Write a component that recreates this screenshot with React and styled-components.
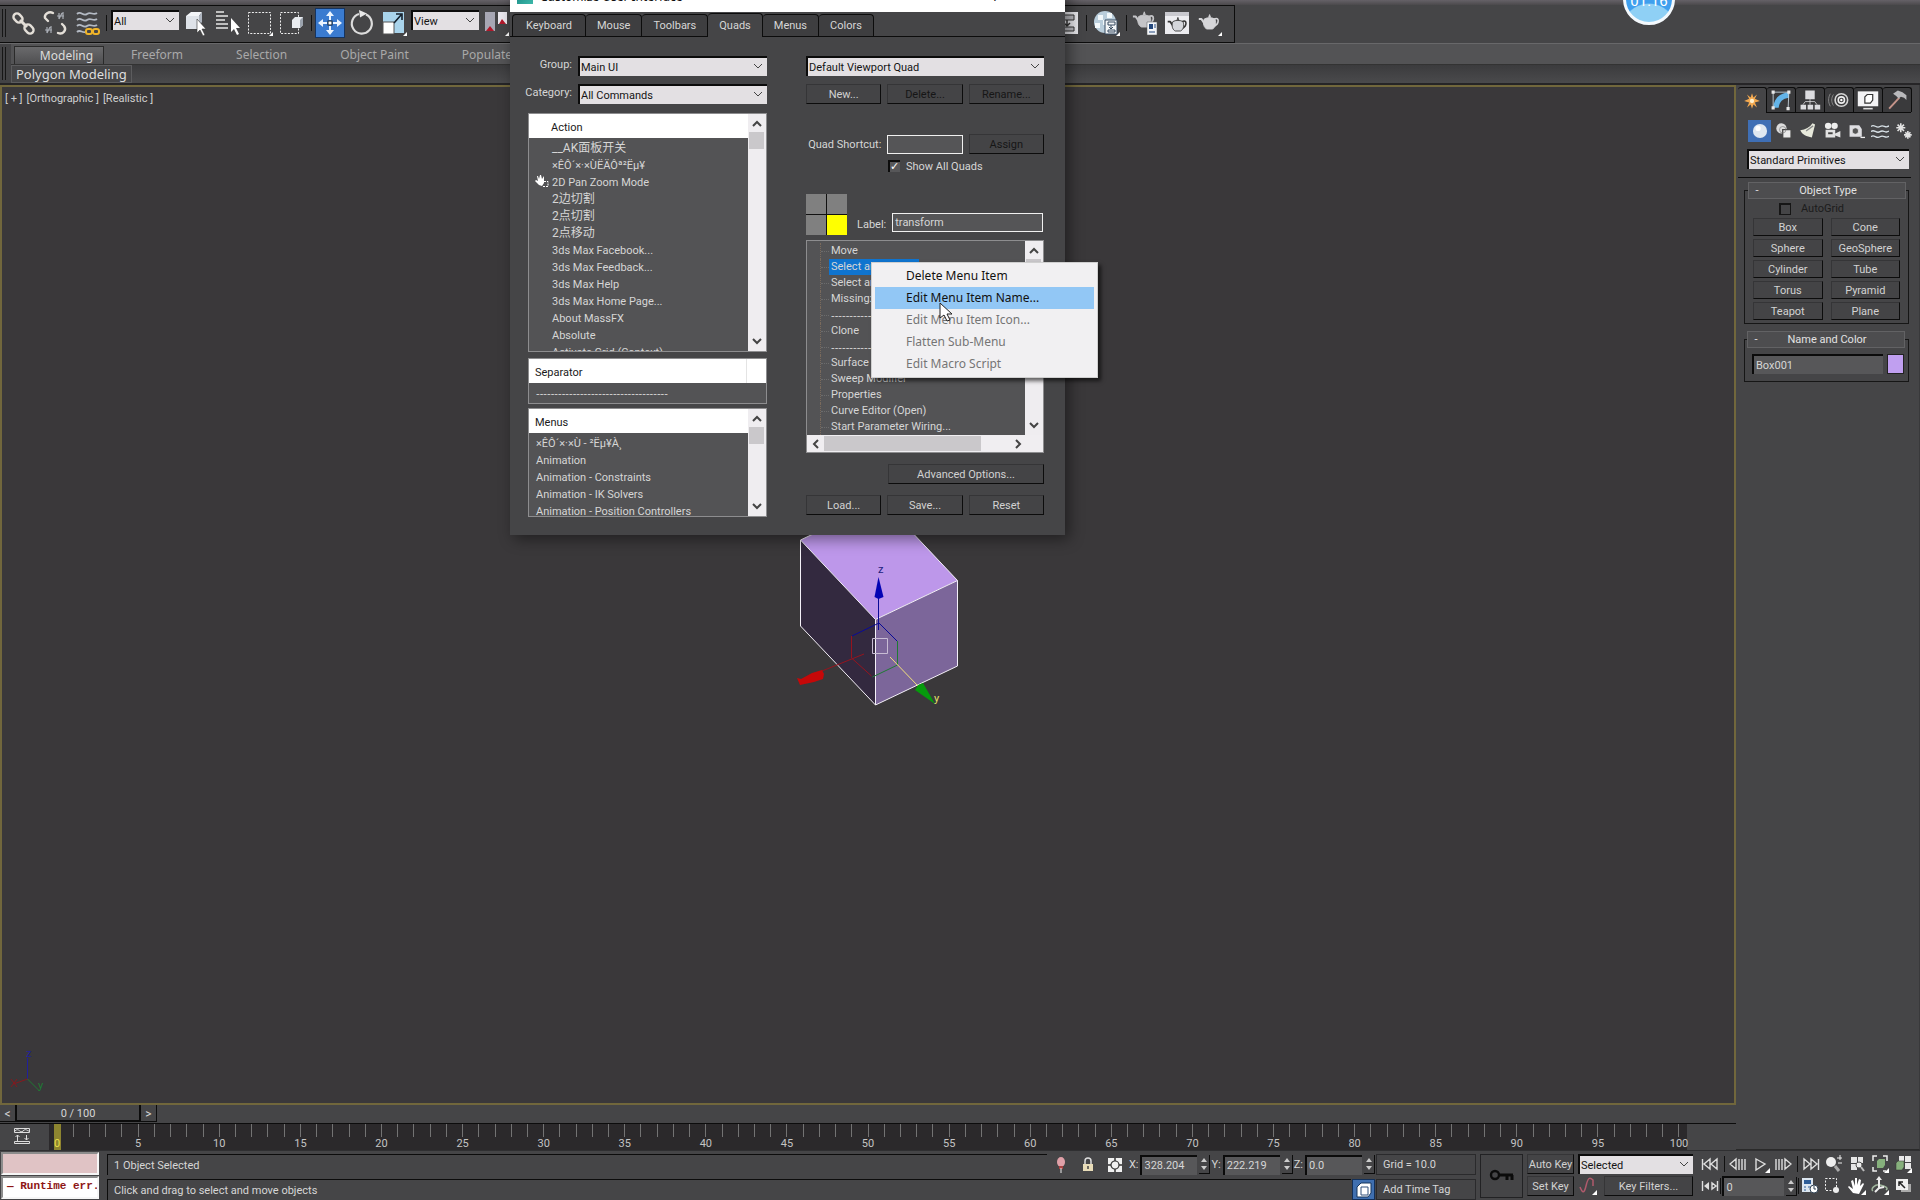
import { useState } from "react";
import styled, { createGlobalStyle, css } from "styled-components";

const tabs = ["Keyboard", "Mouse", "Toolbars", "Quads", "Menus", "Colors"];
const ribbonTabs = ["Modeling", "Freeform", "Selection", "Object Paint", "Populate"];
const actions = [
  "__AK面板开关",
  "×ÊÔ´×·×ÙËÄÔª²Ëµ¥",
  "2D Pan Zoom Mode",
  "2边切割",
  "2点切割",
  "2点移动",
  "3ds Max Facebook...",
  "3ds Max Feedback...",
  "3ds Max Help",
  "3ds Max Home Page...",
  "About MassFX",
  "Absolute",
  "Activate Grid (Context)",
];
const menus = [
  "×ÊÔ´×·×Ù - ²Ëµ¥À¸",
  "Animation",
  "Animation - Constraints",
  "Animation - IK Solvers",
  "Animation - Position Controllers",
];
const quadItems = [
  "Move",
  "Select and Rotate",
  "Select and Scale",
  "Missing:",
  "---------------------",
  "Clone",
  "---------------------",
  "Surface",
  "Sweep Modifier",
  "Properties",
  "Curve Editor (Open)",
  "Start Parameter Wiring...",
];
const contextItems = [
  { text: "Delete Menu Item" },
  { text: "Edit Menu Item Name...", active: true },
  { text: "Edit Menu Item Icon...", disabled: true },
  { text: "Flatten Sub-Menu", disabled: true },
  { text: "Edit Macro Script", disabled: true },
];
const primitives = [
  "Box", "Cone", "Sphere", "GeoSphere", "Cylinder",
  "Tube", "Torus", "Pyramid", "Teapot", "Plane",
];
const frames = Array.from({ length: 101 }, (_, i) => i);
const hasHan = (s) => /[\u4e00-\u9fff]/.test(s);

/* ---------- icons ---------- */

const Corner = () => <path d="M27 23v4h-4z" fill="#fff" />;

const Svg = ({ size = 28, children }) => (
  <svg width={size} height={size} viewBox="0 0 28 28" fill="none" aria-hidden="true">
    {children}
  </svg>
);

const LinkIcon = () => (
  <Svg>
    <g stroke="#e4dfd8" strokeWidth="2.4">
      <rect x="-5" y="-3.5" width="10" height="7" rx="3.5" transform="translate(9 9) rotate(45)" />
      <rect x="-5" y="-3.5" width="10" height="7" rx="3.5" transform="translate(20 20) rotate(45)" />
      <path d="M11 11l7 7" strokeWidth="3" />
    </g>
  </Svg>
);

const UnlinkIcon = () => (
  <Svg>
    <g stroke="#e4dfd8" strokeWidth="2.4" strokeLinecap="round">
      <path d="M12 4C8 2 3 5 4 9l3 3" />
      <path d="M17 24c5 2 9-3 6-7l-2-2" />
    </g>
    <g stroke="#a9adb5" strokeWidth="1.2">
      <path d="M18 4v6M16 7h7M21 4l-3 6M22 3v7" />
      <path d="M6 18v6M4 21h7M9 18l-3 6M10 17v7" />
    </g>
  </Svg>
);

const BindIcon = () => (
  <Svg>
    <g stroke="#b4bac4" strokeWidth="1.8">
      <path d="M4 5c4-4 6 3 10 0s6 2 10-1" />
      <path d="M4 11c4-4 6 3 10 0s6 2 10-1" />
      <path d="M4 17c4-4 6 3 10 0s6 2 10-1" />
      <path d="M4 23c3-3 5 1 8 0" />
    </g>
    <g stroke="#f0b429" strokeWidth="2">
      <rect x="13" y="20" width="6" height="5" rx="2" />
      <rect x="20" y="20" width="6" height="5" rx="2" />
    </g>
  </Svg>
);

const SelectIcon = () => (
  <Svg>
    <path d="M4 7l5-4h11l-3 4z" fill="#f3f5f8" />
    <path d="M4 7h13v13H4z" fill="#dfe3e9" />
    <path d="M17 7l3-4v10l-3 4z" fill="#aeb5bf" />
    <path d="M15 10v14l3-3 3 6 2-1-3-6h4z" fill="#fff" stroke="#333" strokeWidth=".6" />
  </Svg>
);

const ListIcon = () => (
  <Svg>
    <path d="M2 3h8M2 7h12M2 11h9M2 15h12M2 19h12" stroke="#e8e8e8" strokeWidth="1.4" />
    <path d="M17 9v14l3-3 3 6 2-1-3-6h4z" fill="#fff" />
  </Svg>
);

const RegionIcon = () => (
  <Svg>
    <rect x="2.5" y="3.5" width="22" height="21" stroke="#eee" strokeDasharray="2 1.4" />
    <Corner />
  </Svg>
);

const WindowIcon = () => (
  <Svg>
    <rect x="2.5" y="3.5" width="18" height="21" stroke="#eee" strokeDasharray="2 1.4" />
    <path d="M14 11l3-3h8v8l-3 3h-8z" fill="#e9ecf0" />
    <path d="M22 11l3-3v8l-3 3z" fill="#9ba3ae" />
  </Svg>
);

const MoveIcon = () => (
  <Svg>
    <path d="M14 2l4 5h-3v4h-2V7h-3zM14 26l4-5h-3v-4h-2v4h-3zM2 14l5-4v3h4v2H7v3zM26 14l-5-4v3h-4v2h4v3z" fill="#eaf4ff" />
    <rect x="12" y="12" width="4" height="4" fill="#fff" stroke="#123" />
  </Svg>
);

const RotateIcon = () => (
  <Svg>
    <path d="M18 5.500A10 10 0 1 1 11 5" stroke="#dcdcdc" strokeWidth="2.200" />
    <path d="M11 1l8 3.500-7 4z" fill="#e8e8e8" />
  </Svg>
);

const ScaleIcon = () => (
  <Svg>
    <path d="M3 3h21v21H3z" fill="#a9d4ec" />
    <path d="M3 13h11v12H3z" fill="#fff" stroke="#555" />
    <path d="M14 14l7-8M16 5h6v6" stroke="#14202c" strokeWidth="1.600" />
    <Corner />
  </Svg>
);

const AlignIcon = () => (
  <Svg>
    <path d="M3 3h10v19H3z" fill="#a7a7b4" />
    <path d="M16 3h9v12h-9z" fill="#eceaf0" />
    <path d="M4 22h8l-4-5zM17 15h7l-4-5z" fill="#b1182a" />
    <Corner />
  </Svg>
);

const SchematicIcon = () => (
  <Svg>
    <path d="M5 3h22v22H5z" fill="#e6e6ea" />
    <path d="M10 6h13v5H10zM10 18h13v4H10z" fill="#b9b9be" stroke="#333" />
    <path d="M16 11v6M13 14l3 3 3-3" stroke="#333" strokeWidth="1.500" />
  </Svg>
);

const MaterialIcon = () => (
  <Svg>
    <circle cx="12" cy="13" r="11" fill="#b9cddb" />
    <path d="M5 6h5v5H5zM14 4h5v5h-5zM2 14h5v5H2zM10 11h5v5h-5z" fill="#f2f8fb" />
    <path d="M12 11h12v14H12z" fill="#f4f6f8" stroke="#34495e" />
    <path d="M15 13h7v3h-7zM15 21h7v2h-7z" stroke="#34495e" />
    <path d="M18 16v4M16 18l2 2 2-2" stroke="#34495e" />
    <Corner />
  </Svg>
);

const Pot = ({ fill = "#d6d6d9", line = "#d6d6d9" }) => (
  <g stroke={line} strokeLinejoin="round">
    <path d="M19 9c6-3 6 5 0 8" strokeWidth="1.800" />
    <path d="M9 15L5 9H2" strokeWidth="2.200" />
    <path d="M8 9c-2 5 0 10 3 11h6c3-1 5-6 3-11-3-2-9-2-12 0z" fill={fill} />
    <path d="M13 7l1-3 1 3z" fill={fill} />
  </g>
);

const RenderSetupIcon = () => (
  <Svg>
    <g transform="translate(0 -1) scale(.95)"><Pot fill="#c4c4c7" line="#c4c4c7" /></g>
    <path d="M16 13h10v13H16z" fill="#f4f6f9" stroke="#555" strokeWidth=".5" />
    <path d="M18 15h4v5h-4z" fill="#23477c" />
    <path d="M23 16h2M23 18h2M18 23h6" stroke="#23477c" />
  </Svg>
);

const RenderFrameIcon = () => (
  <Svg>
    <path d="M2 3h24v22H2z" fill="#ececf0" />
    <path d="M2 3h24v4H2z" fill="#c8c8ce" />
    <g transform="translate(3 5) scale(.85)"><Pot fill="#d4d6db" line="#333" /></g>
  </Svg>
);

const RenderIcon = () => (
  <Svg>
    <g transform="translate(2 2) scale(.9)"><Pot /></g>
    <Corner />
  </Svg>
);

const panelTabs = [
  <Svg size={20} key="create">
    <path d="M14 3l2 6 5-4-3 6 7 3-7 2 3 7-5-4-2 6-2-6-5 4 3-7-7-2 7-3-3-6 5 4z" fill="#f2a850" />
    <circle cx="14" cy="14" r="3" fill="#fff1cf" />
  </Svg>,
  <Svg size={22} key="modify">
    <path d="M4 24C5 12 12 5 24 4v7c-8 1-12 5-13 13z" fill="#63b4e8" />
    <path d="M4 4v20M4 4h20l-1 22" stroke="#d8e6f0" />
    <path d="M2 2h4v4H2zM22 2h4v4h-4zM2 22h4v4H2zM21 23h4v4h-4z" fill="#e8e8e8" />
  </Svg>,
  <Svg size={22} key="hierarchy">
    <path d="M8 2h12v11H8zM2 20h7v6H2zM11 20h7v6h-7zM20 20h7v6h-7z" fill="#dcdcdf" />
    <path d="M14 13v7M5 20l3-4h12l3 4" stroke="#dcdcdf" />
  </Svg>,
  <Svg size={22} key="motion">
    <circle cx="17" cy="14" r="8" stroke="#d5d5d5" strokeWidth="2" />
    <circle cx="17" cy="14" r="4" stroke="#eee" strokeWidth="2" />
    <circle cx="17" cy="14" r="1.500" fill="#fff" />
    <path d="M3 6c-3 5-3 11 0 16M7 7c-3 4-3 10 0 14" stroke="#999" />
  </Svg>,
  <Svg size={22} key="display">
    <path d="M1 3h26v19H1z" fill="#f3f3f5" />
    <path d="M10 10l3-3h7v7l-3 4h-7z" fill="#fff" stroke="#333" strokeWidth="1.500" />
    <path d="M8 25h12" stroke="#ddd" strokeWidth="2" />
  </Svg>,
  <Svg size={22} key="utilities">
    <path d="M17 11L4 25" stroke="#c5948a" strokeWidth="2.500" />
    <path d="M9 6l6-4 6 2 5 4v6l-3-3-4-1-3 2-3-3z" fill="#b9b9bc" />
  </Svg>,
];

const categoryIcons = [
  <Svg size={18} key="geometry">
    <circle cx="14" cy="14" r="11" fill="#dfe8f1" />
    <circle cx="11" cy="10" r="4" fill="#fff" />
  </Svg>,
  <Svg size={18} key="shapes">
    <circle cx="10" cy="10" r="8" fill="#dcdcdc" />
    <path d="M12 12h13v13H12z" fill="#e9e9e9" stroke="#444" strokeWidth="2" />
    <circle cx="12" cy="12" r="5" stroke="#777" />
  </Svg>,
  <Svg size={18} key="lights">
    <path d="M2 13C10 12 17 8 21 2l4 2-5 20C12 23 5 20 2 13z" fill="#e7e9db" />
    <path d="M11 14l11-8" stroke="#888" strokeWidth="2" />
  </Svg>,
  <Svg size={18} key="cameras">
    <circle cx="8" cy="6" r="5" fill="#eee" />
    <circle cx="18" cy="6" r="5" fill="#eee" />
    <path d="M4 12h15v12H4zM19 18l8-4v10l-8-3z" fill="#e2e2e2" />
    <path d="M8 16h7v3H8z" fill="#444" />
  </Svg>,
  <Svg size={18} key="helpers">
    <path d="M4 5h15l4 6v12H4z" fill="#dedee2" />
    <circle cx="13" cy="14" r="5" fill="#555" stroke="#fff" />
    <path d="M21 24h7" stroke="#eee" strokeWidth="2" />
  </Svg>,
  <Svg size={18} key="spacewarps">
    <g stroke="#d9e2e8" strokeWidth="2">
      <path d="M0 7c5-5 8 4 14 0s8 4 14-1" />
      <path d="M0 15c5-5 8 4 14 0s8 4 14-1" />
      <path d="M0 23c5-5 8 4 14 0s8 4 14-1" />
    </g>
  </Svg>,
  <Svg size={18} key="systems">
    <g stroke="#e2e2e2" strokeWidth="2.500">
      <path d="M9 2v14M2 9h14M4 4l10 10M14 4L4 14" />
      <path d="M20 14v12M14 20h12M16 16l8 8M24 16l-8 8" />
    </g>
  </Svg>,
];

const NavSvg = ({ children }) => (
  <svg width="20" height="20" viewBox="0 0 20 20" fill="none" aria-hidden="true">
    {children}
  </svg>
);

const navTop = [
  <NavSvg key="zoom">
    <circle cx="7" cy="8" r="5" fill="#eee" />
    <path d="M11 12l4 5" stroke="#aaa" strokeWidth="3" />
    <path d="M16 1v5M13 4h5M14 9h4" stroke="#eee" />
  </NavSvg>,
  <NavSvg key="zoomall">
    <path d="M4 3h6v6H4zM11 3h5v6h-5zM4 10h6v6H4z" fill="#e6e6e6" />
    <circle cx="12" cy="11" r="3" fill="#eee" stroke="#555" />
    <path d="M14 13l3 4" stroke="#bbb" strokeWidth="2" />
  </NavSvg>,
  <NavSvg key="extents">
    <path d="M3 7V2h4M13 2h4v5M3 13v4h4M13 17h3" stroke="#eee" strokeWidth="1.500" />
    <path d="M7 7l2-2h6v6l-2 3H7z" fill="#86b07c" />
    <path d="M19 14v5h-5z" fill="#fff" />
  </NavSvg>,
  <NavSvg key="extentsall">
    <path d="M6 2h5v6H6zM12 2h6v6h-6zM12 9h6v6h-6z" fill="#e8e8e8" />
    <path d="M3 9l2-2h6v6l-2 3H3z" fill="#86b07c" stroke="#333" strokeWidth=".5" />
    <path d="M19 14v5h-5z" fill="#fff" />
  </NavSvg>,
];

const navBottom = [
  <NavSvg key="region">
    <path d="M1.500 2.500h11v12h-11z" stroke="#eee" strokeDasharray="2 1.500" />
    <circle cx="12" cy="14" r="3" fill="#eee" />
  </NavSvg>,
  <NavSvg key="pan">
    <path d="M6 17l-5-6 1-1 4 3-2-8 2-1 2 6V2h2v7l2-6 2 1-1 6 3-3 1 1-5 10z" fill="#fff" />
    <path d="M19 14v5h-5z" fill="#fff" />
  </NavSvg>,
  <NavSvg key="orbit">
    <path d="M3 15c-3-2 2-7 7-6s9 3 6 5" stroke="#9fb59c" strokeWidth="1.500" />
    <path d="M9 12V4M9 12l5-1M9 12l-4 4" stroke="#eee" strokeWidth="2" />
    <path d="M6 4l3-4 3 4z" fill="#eee" />
    <path d="M19 14v5h-5z" fill="#fff" />
  </NavSvg>,
  <NavSvg key="maximize">
    <path d="M8 8h10v8H8z" fill="#aaa" />
    <path d="M3 3h12v11H3z" fill="#f0f0f0" />
    <path d="M6 6l6 6M6 10V6h4" stroke="#222" strokeWidth="1.500" />
  </NavSvg>,
];

const PlayIcon = ({ d, fill, corner }) => (
  <svg width="18" height="18" viewBox="0 0 18 18" fill="none" aria-hidden="true">
    <path d={d} stroke="#dedede" strokeWidth="1.400" />
    {fill && <path d={fill} fill="#dedede" />}
    {corner && <path d="M18 13v5h-5z" fill="#fff" />}
  </svg>
);

const Drop = ({ label, value, w, id }) => (
  <SelectWrap $w={w}>
    <Select aria-label={label} id={id} defaultValue={value}>
      <option>{value}</option>
    </Select>
    <Chevron width="10" height="6" viewBox="0 0 10 6" fill="none">
      <path d="M1 1l4 4 4-4" stroke="#444" />
    </Chevron>
  </SelectWrap>
);

const ScrollArrow = ({ turn }) => (
  <ArrowBtn aria-label="Scroll">
    <svg width="10" height="10" viewBox="0 0 10 10" fill="none">
      <path d="M1 7l4-4 4 4" stroke="#444" strokeWidth="2" transform={`rotate(${turn} 5 5)`} />
    </svg>
  </ArrowBtn>
);

const VScroll = ({ thumb = 17 }) => (
  <VBar>
    <ScrollArrow turn={0} />
    <VThumb $h={thumb} />
    <ScrollArrow turn={180} />
  </VBar>
);

const Spin = () => (
  <Spinner aria-label="Spinner">
    <svg width="8" height="14" viewBox="0 0 8 14">
      <path d="M1 5l3-4 3 4zM1 9l3 4 3-4z" fill="#ccc" />
    </svg>
  </Spinner>
);

const Cube = () => (
  <CubeSvg width="200" height="190" viewBox="0 0 200 190" fill="none">
    <path d="M20.500 10L102.500-29 177.500 50.500 95.500 89.500z" fill="#bd97ea" />
    <path d="M20.500 10L95.500 89.500V175L20.500 96z" fill="#33293f" />
    <path d="M95.500 89.500l82-39V136l-82 39z" fill="#7c669a" />
    <path
      d="M20.500 10L95.500 89.500V175L20.500 96zM95.500 89.500l82-39V136l-82 39M177.500 50.500L102.500-29 20.500 10"
      stroke="#f4f0f8"
    />
    <path d="M72 106l27-13 18 18M98.500 100V66" stroke="#0a0a96" />
    <path d="M98.500 47l5 20-5 2-4-2z" fill="#0404b4" />
    <path d="M71.500 106v22l20 18M84 124l-42 17" stroke="#96141e" />
    <path d="M42 140l2 4-1 5-9 3-14 3-3-7 4 1 11-6z" fill="#c60808" />
    <path d="M117.500 111v24l-25 12" stroke="#1f7a34" />
    <path d="M110 127l28 29" stroke="#f3e17c" />
    <path d="M135 160l3-5 5-2 12 21z" fill="#069a0c" />
    <path d="M92.500 108.500h15v15h-15z" stroke="#c8bcd4" />
    <text x="98" y="43" fill="#20207c" fontSize="11">z</text>
    <text x="154" y="172" fill="#e6e06a" fontSize="11">y</text>
  </CubeSvg>
);

const App = () => {
  const [tab, setTab] = useState("Quads");

  return (
    <Screen>
      <Global />
      <TopStrip />
      <ToolbarRow>
        <Toolbar>
          <Tools>
            <Grip />
            <ToolGroup>
              <Tool aria-label="Link"><LinkIcon /></Tool>
              <Tool aria-label="Unlink"><UnlinkIcon /></Tool>
              <Tool aria-label="Bind"><BindIcon /></Tool>
            </ToolGroup>
            <Sep />
            <ToolDrop>
              <Drop label="Selection filter" value="All" w={68} />
            </ToolDrop>
            <ToolGroup>
              <Tool aria-label="Select"><SelectIcon /></Tool>
              <Tool aria-label="Select by name"><ListIcon /></Tool>
              <Tool aria-label="Region"><RegionIcon /></Tool>
              <Tool aria-label="Window"><WindowIcon /></Tool>
            </ToolGroup>
            <Sep />
            <ToolGroup>
              <Tool aria-label="Move" $on><MoveIcon /></Tool>
              <Tool aria-label="Rotate"><RotateIcon /></Tool>
              <Tool aria-label="Scale"><ScaleIcon /></Tool>
            </ToolGroup>
            <ToolDrop>
              <Drop label="Coordinates" value="View" w={68} />
            </ToolDrop>
            <Tool aria-label="Pivot"><AlignIcon /></Tool>
          </Tools>
          <Tools>
            <Tool aria-label="Schematic view"><SchematicIcon /></Tool>
            <Sep $wide />
            <Tool aria-label="Material editor"><MaterialIcon /></Tool>
            <Sep />
            <ToolGroup>
              <Tool aria-label="Render setup"><RenderSetupIcon /></Tool>
              <Tool aria-label="Rendered frame"><RenderFrameIcon /></Tool>
              <Tool aria-label="Render"><RenderIcon /></Tool>
            </ToolGroup>
          </Tools>
        </Toolbar>
      </ToolbarRow>

      <Ribbon>
        <Grip />
        <RibbonBody>
          <RibbonTabs>
            {ribbonTabs.map((t, i) => (
              <RibbonTab key={t} $on={i === 0}>{t}</RibbonTab>
            ))}
          </RibbonTabs>
          <RibbonPanel>
            <RibbonButton>Polygon Modeling</RibbonButton>
          </RibbonPanel>
        </RibbonBody>
      </Ribbon>

      <Middle>
        <MainCol>
          <Viewport>
            <ViewLabels>
              <ViewLabel>[ + ]</ViewLabel>
              <ViewLabel>[Orthographic ]</ViewLabel>
              <ViewLabel>[Realistic ]</ViewLabel>
            </ViewLabels>
            <Cube />
            <Tripod width="44" height="58" viewBox="0 0 44 58" fill="none">
              <path d="M21.500 19v21" stroke="#20209a" />
              <path d="M21.500 40l-14 5M5 40l6 8M11 40l-6 8" stroke="#86181e" />
              <path d="M21.500 40l12 12" stroke="#1f7a34" />
              <text x="20" y="18" fill="#20209a" fontSize="11">z</text>
              <text x="32" y="50" fill="#1f7a34" fontSize="11">y</text>
            </Tripod>
          </Viewport>
          <TimeSlider>
            <SliderStep>&lt;</SliderStep>
            <SliderHandle>0 / 100</SliderHandle>
            <SliderStep>&gt;</SliderStep>
          </TimeSlider>
          <TrackBar>
            <MiniCurve aria-label="Open mini curve editor">
              <svg width="18" height="18" viewBox="0 0 18 18" fill="none" stroke="#ddd">
                <path d="M1.500 1.500h15v4h-15zM2 4c4-4 5 3 8 0s4 0 6 0M4.500 14V8M2.500 10l2-2 2 2M13.500 8v5M11.500 11l2 2 2-2M1.500 14.500h15v2h-15z" />
              </svg>
            </MiniCurve>
            <Ticks>
              {frames.map((f) => (
                <Tick key={f} $now={f === 0}>
                  {f % 5 === 0 && <TickLabel $now={f === 0}>{f}</TickLabel>}
                </Tick>
              ))}
            </Ticks>
          </TrackBar>
        </MainCol>

        <CommandPanel>
          <PanelTabs>
            {panelTabs.map((icon, i) => (
              <PanelTab key={icon.key} $on={i === 0} aria-label={icon.key}>{icon}</PanelTab>
            ))}
          </PanelTabs>
          <Categories>
            {categoryIcons.map((icon, i) => (
              <Category key={icon.key} $on={i === 0} aria-label={icon.key}>{icon}</Category>
            ))}
          </Categories>
          <PanelSelect>
            <Drop label="Primitive set" value="Standard Primitives" />
          </PanelSelect>
          <Rollout>
            <RolloutHead><span>-</span>Object Type</RolloutHead>
            <AutoGrid>
              <DarkCheck type="checkbox" disabled />
              AutoGrid
            </AutoGrid>
            <PrimGrid>
              {primitives.map((p) => (
                <PrimButton key={p}>{p}</PrimButton>
              ))}
            </PrimGrid>
          </Rollout>
          <Rollout>
            <RolloutHead><span>-</span>Name and Color</RolloutHead>
            <NameRow>
              <SunkenInput aria-label="Object name" defaultValue="Box001" />
              <Swatch aria-label="Object color" />
            </NameRow>
          </Rollout>
        </CommandPanel>
      </Middle>

      <StatusBar>
        <Listener>
          <ListenerBox $pink />
          <ListenerBox>— Runtime err.</ListenerBox>
        </Listener>
        <StatusRows>
          <StatusRow>
            <Prompt>1 Object Selected</Prompt>
            <LockTools>
              <Tool aria-label="Isolate">
                <NavSvg>
                  <ellipse cx="10" cy="7" rx="4" ry="5" fill="#dfa0a8" />
                  <path d="M8 11h4v3H8z" fill="#a44" />
                  <path d="M10 13v5" stroke="#eee" />
                </NavSvg>
              </Tool>
              <Tool aria-label="Lock selection">
                <NavSvg>
                  <path d="M7 9V6c0-4 6-4 6 0v3" stroke="#ddd" strokeWidth="1.500" />
                  <path d="M5 9h10v7H5z" fill="#e8dcb8" />
                  <path d="M10 11v3" stroke="#444" strokeWidth="1.500" />
                </NavSvg>
              </Tool>
              <Tool aria-label="Absolute mode">
                <NavSvg>
                  <path d="M3 3h14v14H3z" fill="#f0f0f0" />
                  <circle cx="10" cy="10" r="4" stroke="#333" strokeWidth="1.200" />
                  <path d="M10 3v3M10 14v3M3 10h3M14 10h3" stroke="#333" strokeWidth="1.500" />
                </NavSvg>
              </Tool>
            </LockTools>
            {[["X:", "328.204"], ["Y:", "222.219"], ["Z:", "0.0"]].map(([axis, v]) => (
              <Coord key={axis}>
                {axis}
                <SunkenInput $w={57} defaultValue={v} />
                <Spin />
              </Coord>
            ))}
            <InfoCell>Grid = 10.0</InfoCell>
          </StatusRow>
          <StatusRow>
            <Prompt>Click and drag to select and move objects</Prompt>
            <BlueTool aria-label="Adaptive degradation">
              <NavSvg>
                <path d="M3 7l4-4h10v10l-3 4H3z" fill="#fff" stroke="#17365c" />
                <path d="M7 7h7v8H7z" stroke="#33507a" />
              </NavSvg>
            </BlueTool>
            <InfoCell>Add Time Tag</InfoCell>
          </StatusRow>
        </StatusRows>
        <KeyButton aria-label="Set keys">
          <svg width="26" height="14" viewBox="0 0 26 14" fill="none">
            <circle cx="6" cy="7" r="4" stroke="#0b0b0b" strokeWidth="2.400" />
            <path d="M10 7h14M18 7v5M23 7v5" stroke="#0b0b0b" strokeWidth="3" />
          </svg>
        </KeyButton>
        <KeyCol $w={47}>
          <Button>Auto Key</Button>
          <Button>Set Key</Button>
        </KeyCol>
        <KeyCol $w={115}>
          <Drop label="Key set" value="Selected" />
          <FilterRow>
            <Tool aria-label="Tangents">
              <NavSvg>
                <path d="M2 11c2 5 4 8 6-1s4-9 7-6v6" stroke="#b05a6c" strokeWidth="1.500" />
                <path d="M19 14v5h-5z" fill="#fff" />
              </NavSvg>
            </Tool>
            <Button $grow>Key Filters...</Button>
          </FilterRow>
        </KeyCol>
        <PlayCol>
          <PlayRow>
            <Tool aria-label="Start"><PlayIcon d="M1.500 4v11M9 4v10L3 9zM16 4v10l-6-5z" /></Tool>
            <Bar />
            <Tool aria-label="Previous"><PlayIcon d="M7 4v10L1 9zM10 4v11M13 4v11M16 4v11" /></Tool>
            <Tool aria-label="Play"><PlayIcon d="M4 4l9 5-9 6z" corner /></Tool>
            <Tool aria-label="Next"><PlayIcon d="M11 4v10l6-5zM2 4v11M5 4v11M8 4v11" /></Tool>
            <Bar />
            <Tool aria-label="End"><PlayIcon d="M16.500 4v11M9 4v10l6-5zM2 4v10l6-5z" /></Tool>
          </PlayRow>
          <PlayRow>
            <Tool aria-label="Key mode"><PlayIcon d="M1.500 4v10M16.500 4v10M11 6v6l4-3z" fill="M8 5v8L3 9z" /></Tool>
            <Bar />
            <SunkenInput aria-label="Frame" $w={62} defaultValue="0" />
            <Spin />
            <Bar />
            <Tool aria-label="Time configuration">
              <NavSvg>
                <path d="M2 2h11v14H2z" fill="#dce6f0" />
                <path d="M4 4h7v4H4z" fill="#2f5e98" />
                <path d="M4 11h2M8 11h2M4 14h2" stroke="#2f5e98" />
                <circle cx="14" cy="13" r="4" fill="#fff" stroke="#345" />
                <path d="M14 10v3h2" stroke="#345" />
              </NavSvg>
            </Tool>
          </PlayRow>
        </PlayCol>
        <NavCol>
          <NavRow>{navTop.map((n) => <Tool key={n.key} aria-label={n.key}>{n}</Tool>)}</NavRow>
          <NavRow>{navBottom.map((n) => <Tool key={n.key} aria-label={n.key}>{n}</Tool>)}</NavRow>
        </NavCol>
      </StatusBar>

      <Dialog>
        <TitleBar>
          <AppMark />
          <TitleText>Customize User Interface</TitleText>
          <TitleButton>?</TitleButton>
          <TitleButton>✕</TitleButton>
        </TitleBar>
        <DialogTabs>
          {tabs.map((t) => (
            <DialogTab key={t} $on={t === tab} onClick={() => setTab(t)}>{t}</DialogTab>
          ))}
        </DialogTabs>
        <DialogBody>
          <LeftCol>
            <Field>
              <label htmlFor="group">Group:</label>
              <Drop id="group" value="Main UI" w={189} />
            </Field>
            <Field>
              <label htmlFor="category">Category:</label>
              <Drop id="category" value="All Commands" w={189} />
            </Field>
            <ListBox $h={239} $gap={1}>
              <ListMain>
                <ListHead $indent>Action</ListHead>
                <Rows $indent>
                  {actions.map((a) => (
                    <Row key={a} $han={hasHan(a)}>
                      {a.startsWith("2D") && (
                        <RowIcon width="14" height="14" viewBox="0 0 14 14" fill="none">
                          <path d="M4 11L0 7l1-1 2 1-1-5h1l1 3 1-4h1l1 4 2-3v7l-2 3z" fill="#fff" />
                          <path d="M9 7.500h4v5H8" stroke="#fff" strokeDasharray="2 1" />
                        </RowIcon>
                      )}
                      {a}
                    </Row>
                  ))}
                </Rows>
              </ListMain>
              <VScroll />
            </ListBox>
            <ListBox $h={46} $gap={6}>
              <ListMain>
                <ListHead>Separator</ListHead>
                <Rows><Row $dash>------------------------------------</Row></Rows>
              </ListMain>
              <HeadStub />
            </ListBox>
            <ListBox $h={109} $gap={4}>
              <ListMain>
                <ListHead>Menus</ListHead>
                <Rows>
                  {menus.map((m) => (
                    <Row key={m}>{m}</Row>
                  ))}
                </Rows>
              </ListMain>
              <VScroll />
            </ListBox>
          </LeftCol>

          <RightCol>
            <Drop label="Quad menu" value="Default Viewport Quad" />
            <ButtonGrid>
              <Button>New...</Button>
              <Button disabled>Delete...</Button>
              <Button disabled>Rename...</Button>
            </ButtonGrid>
            <ShortcutRow>
              <label htmlFor="shortcut">Quad Shortcut:</label>
              <OutlineInput id="shortcut" />
              <Button disabled>Assign</Button>
            </ShortcutRow>
            <CheckRow>
              <ShowCheck type="checkbox" defaultChecked />
              Show All Quads
            </CheckRow>
            <QuadRow>
              <QuadPicker>
                <Quad aria-label="Top left" />
                <Quad aria-label="Top right" />
                <Quad aria-label="Bottom left" />
                <Quad aria-label="Bottom right" $on />
              </QuadPicker>
              <label htmlFor="quadlabel">Label:</label>
              <OutlineInput id="quadlabel" $grow defaultValue="transform" />
            </QuadRow>
            <TreeBox>
              <TreeTop>
                <Tree>
                  {quadItems.map((q, i) => (
                    <TreeItem key={i}>
                      <TreeText $on={i === 1} $dash={q[0] === "-"}>{q}</TreeText>
                    </TreeItem>
                  ))}
                </Tree>
                <VScroll thumb={30} />
              </TreeTop>
              <HBar>
                <ScrollArrow turn={-90} />
                <HThumb />
                <ScrollArrow turn={90} />
              </HBar>
            </TreeBox>
            <AdvancedRow>
              <Button $grow>Advanced Options...</Button>
            </AdvancedRow>
            <ButtonGrid>
              <Button>Load...</Button>
              <Button>Save...</Button>
              <Button>Reset</Button>
            </ButtonGrid>
          </RightCol>
        </DialogBody>
      </Dialog>

      <ContextMenu>
        {contextItems.map((c) => (
          <ContextItem key={c.text} $on={c.active} disabled={c.disabled}>{c.text}</ContextItem>
        ))}
        <Pointer width="14" height="20" viewBox="0 0 14 20">
          <path d="M1 1v15l4-3 3 6 3-1-3-6h5z" fill="#fff" stroke="#222" />
        </Pointer>
      </ContextMenu>

      <Recorder>01:16</Recorder>
    </Screen>
  );
};

export default App;

const Global = createGlobalStyle`
  * {
    box-sizing: border-box;
  }
  body {
    margin: 0;
    overflow: hidden;
    background: #454547;
  }
  body, button, input, select {
    font-family: Roboto, "Noto Sans CJK SC", sans-serif;
    font-size: 11px;
    color: #d6d6d6;
  }
  button {
    padding: 0;
    border: none;
    background: none;
  }
  ul {
    list-style: none;
    margin: 0;
    padding: 0;
  }
`;

const Screen = styled.div`
  position: relative;
  height: 100vh;
  display: flex;
  flex-direction: column;
  overflow: hidden;
  background: #454547;
`;

const TopStrip = styled.div`
  height: 5px;
  background: linear-gradient(#656167, #4b494c);
`;

const ToolbarRow = styled.div`
  height: 39px;
  border-bottom: 1px solid #68686a;
`;

const Toolbar = styled.div`
  width: 1235px;
  height: 38px;
  display: flex;
  justify-content: space-between;
  padding: 0 11px 0 2px;
  border: solid #0c0c0c;
  border-width: 1px 1px 1px 0;
`;

const Tools = styled.div`
  display: flex;
  align-items: center;
  gap: 3px;
  padding-bottom: 2px;
`;

const ToolDrop = styled.div`
  align-self: flex-start;
  padding-top: 4px;
`;

const Grip = styled.div`
  width: 4px;
  align-self: stretch;
  margin: 3px 0;
  border: solid #161616;
  border-width: 0 1px;
`;

const Sep = styled.div`
  width: ${(p) => (p.$wide ? 8 : 4)}px;
  height: 16px;
  background: linear-gradient(#111, #111) center / 1px 100% no-repeat;
`;

const ToolGroup = styled.div`
  display: flex;
  gap: 4px;
`;

const Tool = styled.button`
  display: flex;
  align-items: center;
  justify-content: center;
  ${(p) =>
    p.$on &&
    css`
      background: #3a7bd0;
      box-shadow: 0 0 0 1px #16345f;
    `}
`;

const SelectWrap = styled.div`
  display: grid;
  width: ${(p) => (p.$w ? p.$w + "px" : "100%")};
  height: 20px;
`;

const Select = styled.select`
  grid-area: 1 / 1;
  appearance: none;
  min-width: 0;
  padding: 0 1px;
  border: solid #0b0b0b;
  border-width: 2px 0 0 2px;
  border-radius: 0;
  background: #e3e0e3;
  color: #141414;
`;

const Chevron = styled.svg`
  grid-area: 1 / 1;
  justify-self: end;
  align-self: center;
  margin-right: 4px;
  pointer-events: none;
`;

const Ribbon = styled.div`
  display: flex;
  gap: 5px;
  height: 41px;
  padding-left: 2px;
  border-bottom: 2px solid #262527;
  background: #434345;
`;

const RibbonBody = styled.div`
  flex: 1;
`;

const RibbonTabs = styled.div`
  display: flex;
  align-items: flex-end;
  gap: 53px;
  height: 20px;
  padding-left: 3px;
  background: #535355;
`;

const RibbonTab = styled.button`
  height: 18px;
  font-family: "Noto Sans", sans-serif;
  font-size: 12px;
  line-height: 18px;
  color: #a9a9a9;
  ${(p) =>
    p.$on &&
    css`
      width: 90px;
      margin-right: -26px;
      padding-left: 15px;
      color: #dcdcdc;
      border: 1px solid #2a2a2a;
      border-bottom: none;
      background: linear-gradient(#6a6a6c, #4f4f51);
    `}
`;

const RibbonPanel = styled.div`
  height: 19px;
  border-top: 1px solid #333;
  background: linear-gradient(#3b3b3d, #4a4a4c);
`;

const RibbonButton = styled.button`
  height: 18px;
  padding: 0 4px;
  border: 1px solid #5c5c5e;
  background: #454547;
  font-family: "Noto Sans", sans-serif;
  font-size: 13px;
  line-height: 16px;
  color: #dedede;
`;

const Middle = styled.div`
  flex: 1;
  min-height: 0;
  display: grid;
  grid-template-columns: 1fr 184px;
`;

const MainCol = styled.div`
  display: flex;
  flex-direction: column;
  min-width: 0;
`;

const Viewport = styled.div`
  position: relative;
  flex: 1;
  border: 2px solid #71673c;
  background: #3a383a;
`;

const ViewLabels = styled.div`
  display: flex;
  gap: 4px;
  padding: 4px 3px;
`;

const ViewLabel = styled.button`
  line-height: 16px;
  color: #cfcfcf;
`;

const CubeSvg = styled.svg`
  position: absolute;
  left: 778px;
  top: 443px;
`;

const Tripod = styled.svg`
  position: absolute;
  left: 4px;
  bottom: 6px;
`;

const TimeSlider = styled.div`
  display: flex;
  height: 18px;
`;

const SliderStep = styled.button`
  width: 16px;
  height: 17px;
  padding-top: 2px;
  border: solid #0c0c0c;
  border-width: 0 1px 1px 0;
  font-size: 12px;
  line-height: 14px;
`;

const SliderHandle = styled.button`
  width: 125px;
  height: 17px;
  padding-top: 2px;
  border: solid #0c0c0c;
  border-width: 0 2px 2px 1px;
  line-height: 14px;
`;

const TrackBar = styled.div`
  display: flex;
  height: 27px;
  padding-right: 49px;
  border-top: 1px solid #0c0c0c;
`;

const MiniCurve = styled.button`
  width: 49px;
  padding-right: 6px;
`;

const Ticks = styled.div`
  flex: 1;
  display: flex;
  background: #2b292b;
`;

const Tick = styled.div`
  flex: 1 1 0;
  min-width: 0;
  display: flex;
  justify-content: center;
  align-items: flex-end;
  background: linear-gradient(#737373, #737373) top center / 1px 13px no-repeat;
  ${(p) =>
    p.$now &&
    css`
      background: linear-gradient(#8d8530, #8d8530) center / 7px 100% no-repeat;
    `}
`;

const TickLabel = styled.span`
  line-height: 12px;
  color: ${(p) => (p.$now ? "#e6de4a" : "#c4c4c4")};
`;

const CommandPanel = styled.aside`
  padding: 2px 8px 0 2px;
  border-right: 1px solid #39393b;
  border-bottom: 1px solid #2a2a2a;
`;

const PanelTabs = styled.div`
  display: grid;
  grid-template-columns: repeat(6, 29px);
  height: 26px;
  border-bottom: 1px solid #0c0c0c;
`;

const PanelTab = styled.button`
  display: flex;
  justify-content: center;
  align-items: center;
  border: solid #0c0c0c;
  border-width: 1px 1px 0 0;
  border-radius: 3px 3px 0 0;
  background: ${(p) => (p.$on ? "#454547" : "#3a3a3c")};
  height: ${(p) => (p.$on ? 26 : 25)}px;
`;

const Categories = styled.div`
  display: grid;
  grid-template-columns: repeat(7, 24px);
  height: 22px;
  margin: 7px 0 0 10px;
`;

const Category = styled.button`
  display: flex;
  align-items: center;
  justify-content: center;
  width: 23px;
  background: ${(p) => (p.$on ? "#3f6fb5" : "none")};
`;

const PanelSelect = styled.div`
  padding: 7px 2px 8px 9px;
  border-bottom: 1px solid #0c0c0c;
`;

const Rollout = styled.section`
  margin: 12px 2px 0 6px;
  padding: 0 8px 3px 8px;
  border: 1px solid #161616;
  & + & {
    margin-top: 15px;
    padding: 0 4px 7px 7px;
  }
`;

const RolloutHead = styled.button`
  display: grid;
  grid-template-columns: 12px 1fr 12px;
  align-items: center;
  width: 158px;
  height: 17px;
  margin: -9px 0 0 -5px;
  padding-left: 2px;
  border: 1px solid #626264;
  background: #4d4d4f;
  color: #e2e2e2;
`;

const AutoGrid = styled.label`
  display: flex;
  align-items: center;
  gap: 10px;
  height: 19px;
  padding-left: 26px;
  color: #1c1c1c;
`;

const DarkCheck = styled.input`
  appearance: none;
  width: 12px;
  height: 12px;
  margin: 0;
  border: solid #161616;
  border-width: 2px 1px 1px 2px;
`;

const PrimGrid = styled.div`
  display: grid;
  grid-template-columns: 1fr 1fr;
  gap: 3px 8px;
`;

const Button = styled.button`
  height: 20px;
  min-width: 0;
  flex: ${(p) => (p.$grow ? 1 : "none")};
  border: 1px solid;
  border-color: #353537 #0c0c0c #0c0c0c #353537;
  background: #444446;
  color: #d2d2d2;
  &:disabled {
    color: #161616;
  }
`;

const PrimButton = styled(Button)`
  height: 18px;
`;

const NameRow = styled.div`
  display: flex;
  gap: 4px;
  margin-top: 6px;
`;

const SunkenInput = styled.input`
  ${(p) => (p.$w ? `width: ${p.$w}px;` : "flex: 1; min-width: 0;")}
  height: 20px;
  padding: 0 2px;
  border: solid #0b0b0b;
  border-width: 2px 0 0 2px;
  background: #575759;
  color: #d6d6d6;
`;

const Swatch = styled.button`
  width: 17px;
  height: 20px;
  border: 1px solid #222;
  background: #c09ff0;
`;

const StatusBar = styled.footer`
  display: flex;
  gap: 4px;
  height: 50px;
  border-top: 1px solid #2f2f31;
`;

const Listener = styled.div`
  display: flex;
  flex-direction: column;
  gap: 1px;
  width: 99px;
  margin-right: 4px;
  padding: 1px 0 0 1px;
`;

const ListenerBox = styled.div`
  height: 23px;
  overflow: hidden;
  white-space: nowrap;
  padding-left: 4px;
  border: 2px solid #8c8c8c;
  border-color: #8c8c8c #f6f6f6 #f6f6f6 #8c8c8c;
  background: ${(p) => (p.$pink ? "#e0c3c5" : "#fff")};
  color: #8e1616;
  font-family: "Liberation Mono", monospace;
  font-size: 11px;
  font-weight: bold;
  line-height: 16px;
`;

const StatusRows = styled.div`
  flex: 1;
  min-width: 0;
  display: flex;
  flex-direction: column;
  gap: 4px;
  padding-top: 3px;
`;

const StatusRow = styled.div`
  display: flex;
  gap: 1px;
  height: 21px;
`;

const Prompt = styled.div`
  flex: 1;
  padding-left: 6px;
  border: solid #0c0c0c;
  border-width: 1px 0 0 1px;
  line-height: 21px;
`;

const LockTools = styled.div`
  display: flex;
  gap: 7px;
  padding: 0 3px;
`;

const Coord = styled.label`
  display: flex;
  align-items: center;
  gap: 2px;
`;

const Spinner = styled.button`
  display: flex;
  align-items: center;
  justify-content: center;
  width: 11px;
  height: 19px;
  border: solid #0c0c0c;
  border-width: 0 1px 1px 0;
`;

const InfoCell = styled.div`
  width: 100px;
  padding-left: 6px;
  border: 1px solid #2a2a2c;
  line-height: 20px;
`;

const BlueTool = styled(Tool)`
  width: 23px;
  background: #3f6fb0;
  border: 1px solid #12305a;
`;

const KeyButton = styled.button`
  width: 43px;
  height: 44px;
  margin-top: 3px;
  border: 1px solid #222224;
`;

const KeyCol = styled.div`
  display: flex;
  flex-direction: column;
  gap: 2px;
  width: ${(p) => p.$w}px;
  padding-top: 3px;
`;

const FilterRow = styled.div`
  display: flex;
  gap: 6px;
`;

const PlayCol = styled.div`
  display: flex;
  flex-direction: column;
  gap: 2px;
  width: 123px;
  padding: 3px 0 0 4px;
`;

const PlayRow = styled.div`
  display: flex;
  align-items: center;
  justify-content: space-between;
  height: 20px;
`;

const Bar = styled.div`
  width: 1px;
  height: 16px;
  background: #111;
`;

const NavCol = styled.div`
  display: flex;
  flex-direction: column;
  gap: 2px;
  padding: 3px 7px 0 0;
`;

const NavRow = styled.div`
  display: flex;
  gap: 3px;
`;

/* floating window */

const Dialog = styled.section`
  position: absolute;
  left: 510px;
  top: -20px;
  width: 555px;
  padding-bottom: 18px;
  background: #454547;
  box-shadow: 4px 4px 14px rgba(0, 0, 0, 0.45);
`;

const TitleBar = styled.header`
  display: flex;
  align-items: center;
  height: 32px;
  padding: 0 16px 0 7px;
  background: #fff;
  color: #111;
`;

const AppMark = styled.span`
  width: 16px;
  height: 16px;
  background: linear-gradient(135deg, #16827f, #3cb8a9);
`;

const TitleText = styled.span`
  flex: 1;
  margin-left: 7px;
  font-family: "Noto Sans", sans-serif;
  font-size: 12px;
`;

const TitleButton = styled.button`
  width: 46px;
  height: 32px;
  padding-left: 30px;
  color: #111;
  font-size: 13px;
`;

const DialogTabs = styled.nav`
  display: flex;
  align-items: flex-end;
  height: 25px;
  padding-left: 2px;
  border-bottom: 1px solid #0c0c0c;
`;

const DialogTab = styled.button`
  height: 22px;
  padding: 0 13px;
  border: 1px solid #0c0c0c;
  border-bottom: none;
  border-radius: 4px 4px 0 0;
  background: #3e3e40;
  & + & {
    border-left: none;
    padding: 0 11px;
  }
  ${(p) =>
    p.$on &&
    css`
      height: 24px;
      margin-bottom: -1px;
      background: #454547;
    `}
`;

const DialogBody = styled.div`
  display: grid;
  grid-template-columns: 243px 238px;
  column-gap: 39px;
  padding: 19px 0 0 14px;
`;

const LeftCol = styled.div`
  display: flex;
  flex-direction: column;
`;

const Field = styled.div`
  display: flex;
  justify-content: flex-end;
  gap: 6px;
  margin-bottom: 8px;
  line-height: 18px;
`;

const ListBox = styled.div`
  display: flex;
  height: ${(p) => p.$h}px;
  margin: ${(p) => p.$gap}px 0 0 4px;
  border: 1px solid #8d8d8f;
  background: #535355;
  overflow: hidden;
`;

const ListMain = styled.div`
  flex: 1;
  min-width: 0;
`;

const ListHead = styled.div`
  height: 24px;
  padding: 2px 0 0 ${(p) => (p.$indent ? 22 : 6)}px;
  background: #fff;
  color: #1a1a1a;
  line-height: 23px;
`;

const HeadStub = styled.div`
  width: 20px;
  height: 24px;
  border-left: 1px solid #e4e4e4;
  background: #fff;
`;

const Rows = styled.ul`
  padding: 2px 0 0 ${(p) => (p.$indent ? 23 : 7)}px;
`;

const dashFont = css`
  font-family: "Liberation Sans", sans-serif;
`;

const Row = styled.li`
  position: relative;
  height: 17px;
  font-size: ${(p) => (p.$han ? 12 : 11)}px;
  line-height: 17px;
  white-space: nowrap;
  ${(p) => p.$dash && dashFont}
`;

const RowIcon = styled.svg`
  position: absolute;
  left: -17px;
  top: 0;
`;

const VBar = styled.div`
  display: flex;
  flex-direction: column;
  width: 18px;
  padding: 1px 1px 2px 0;
  background: #efedf0;
`;

const ArrowBtn = styled.button`
  display: flex;
  align-items: center;
  justify-content: center;
  width: 17px;
  height: 17px;
`;

const VThumb = styled.div`
  height: ${(p) => p.$h}px;
  margin: 0 1px auto;
  background: #cac8cb;
`;

const RightCol = styled.div`
  display: flex;
  flex-direction: column;
`;

const ButtonGrid = styled.div`
  display: grid;
  grid-template-columns: repeat(3, 1fr);
  gap: 6px;
  margin-top: 8px;
`;

const ShortcutRow = styled.div`
  display: grid;
  grid-template-columns: repeat(3, 1fr);
  gap: 6px;
  align-items: center;
  margin-top: 30px;
  & label {
    text-align: right;
    white-space: nowrap;
  }
`;

const OutlineInput = styled.input`
  flex: ${(p) => (p.$grow ? 1 : "none")};
  min-width: 0;
  height: 19px;
  padding: 0 2px;
  border: 1px solid #f0f0f0;
  background: #555557;
  color: #d6d6d6;
`;

const CheckRow = styled.label`
  display: flex;
  align-items: center;
  gap: 6px;
  height: 14px;
  margin: 5px 0 0 82px;
`;

const ShowCheck = styled.input`
  appearance: none;
  width: 12px;
  height: 12px;
  margin: 0;
  border: solid #0c0c0c;
  border-width: 2px 0 0 2px;
  background: #575759;
  &:checked::after {
    content: "✓";
    display: block;
    color: #fff;
    font-family: "DejaVu Sans", sans-serif;
    font-size: 11px;
    font-weight: bold;
    line-height: 10px;
  }
`;

const QuadRow = styled.div`
  display: flex;
  align-items: flex-end;
  gap: 5px;
  margin-top: 21px;
  & label {
    margin: 0 1px 4px 5px;
  }
  & input {
    margin: 0 1px 3px 0;
  }
`;

const QuadPicker = styled.div`
  display: grid;
  grid-template-columns: 20px 20px;
  gap: 1px;
  background: #111;
`;

const Quad = styled.button`
  height: 20px;
  background: ${(p) => (p.$on ? "#ffff00" : "#808080")};
`;

const TreeBox = styled.div`
  margin-top: 5px;
  border: 1px solid #8d8d8f;
  background: #535355;
`;

const TreeTop = styled.div`
  display: flex;
`;

const Tree = styled.ul`
  flex: 1;
  min-width: 0;
  overflow: hidden;
  padding: 2px 0 0 13px;
`;

const TreeItem = styled.li`
  display: flex;
  height: 16px;
  border-left: 1px dotted #7a6a5c;
  &::before {
    content: "";
    width: 8px;
    height: 8px;
    border-bottom: 1px dotted #6c6c6c;
  }
`;

const TreeText = styled.span`
  padding: 0 2px;
  line-height: 16px;
  white-space: nowrap;
  background: ${(p) => (p.$on ? "#0f74cf" : "none")};
  ${(p) => p.$dash && dashFont}
`;

const HBar = styled.div`
  display: flex;
  height: 17px;
  padding-right: 17px;
  background: #f0eef1;
`;

const HThumb = styled.div`
  width: 157px;
  margin: 1px auto 1px 0;
  background: #cac8cb;
`;

const AdvancedRow = styled.div`
  display: flex;
  margin: 11px 0 3px 82px;
`;

const ContextMenu = styled.div`
  position: absolute;
  left: 871px;
  top: 262px;
  display: flex;
  flex-direction: column;
  width: 227px;
  padding: 2px 3px;
  border: 1px solid #cfcfcf;
  background: #f1f0f2;
  box-shadow: 3px 3px 4px rgba(0, 0, 0, 0.6);
`;

const ContextItem = styled.button`
  height: 22px;
  padding: 0 0 1px 31px;
  background: ${(p) => (p.$on ? "#92c7f5" : "none")};
  color: #111;
  font-family: "Noto Sans", sans-serif;
  font-size: 12px;
  text-align: left;
  &:disabled {
    color: #757575;
  }
`;

const Pointer = styled.svg`
  position: absolute;
  left: 67px;
  top: 39px;
`;

const Recorder = styled.div`
  position: absolute;
  right: 245px;
  top: -27px;
  width: 52px;
  height: 52px;
  border: 3px solid #f4f9fd;
  border-radius: 50%;
  background: radial-gradient(circle at 50% 120%, #8fd0f5 45%, #3f9fee 47%);
  color: #fff;
  font-size: 15px;
  line-height: 50px;
  text-align: center;
`;
